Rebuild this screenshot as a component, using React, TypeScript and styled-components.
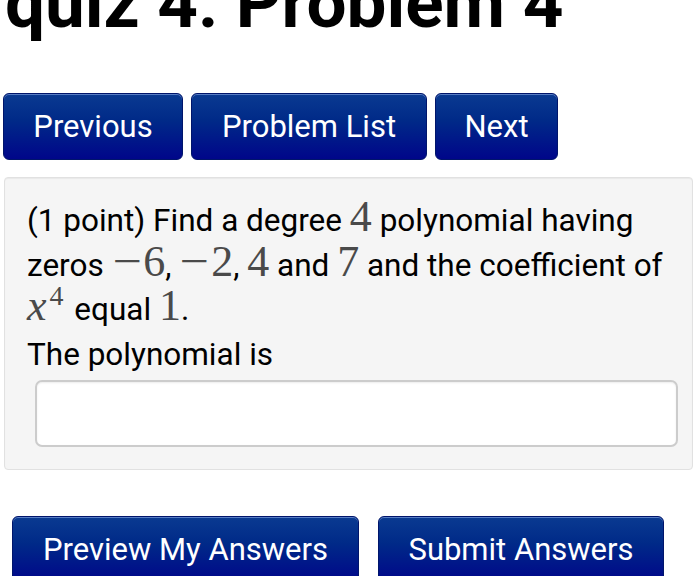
import React from "react";
import styled, { createGlobalStyle } from "styled-components";

const GlobalStyle = createGlobalStyle`
  html, body {
    margin: 0;
    padding: 0;
    background: #ffffff;
    font-family: Roboto, "Liberation Sans", Arial, sans-serif;
    color: #000;
  }
  body {
    width: 697px;
    height: 576px;
    overflow: hidden;
  }
`;

const Page = styled.div`
  display: flex;
  flex-direction: column;
  padding-left: 3px;
`;

const Title = styled.h1`
  margin: -33px 0 0 2px;
  font-size: 71px;
  line-height: 71px;
  font-weight: 700;
  white-space: nowrap;
`;

const NavRow = styled.div`
  display: flex;
  gap: 8px;
  margin-top: 55px;
`;

const Button = styled.button<{ $width: number }>`
  width: ${(p) => p.$width}px;
  height: 67px;
  padding: 0;
  border: 1px solid #00156b;
  border-radius: 6px;
  background: linear-gradient(to bottom, #0a3a91 0%, #002a88 40%, #00068a 100%);
  box-shadow: inset 0 1px 0 rgba(140, 170, 230, 0.6);
  color: #fff;
  font-family: Roboto, "Liberation Sans", Arial, sans-serif;
  font-size: 31px;
  cursor: pointer;
`;

const Panel = styled.div`
  margin: 17px 0 0 1px;
  width: 689px;
  box-sizing: border-box;
  padding: 21px 22px 22px 22px;
  background: #f5f5f5;
  border: 1px solid #e1e1e1;
  border-radius: 4px;
  box-shadow: inset 0 1px 1px rgba(0, 0, 0, 0.05);
`;

const Text = styled.p`
  margin: 0;
  font-size: 31.5px;
  line-height: 44.5px;
  white-space: nowrap;
`;

const M = styled.span<{ $italic?: boolean }>`
  display: inline-block;
  line-height: 0;
  font-family: "Liberation Serif", "DejaVu Serif", serif;
  font-size: 44px;
  color: #4a4a4a;
  font-style: ${(p) => (p.$italic ? "italic" : "normal")};
  padding-right: ${(p) => (p.$italic ? "2px" : "0")};
`;

const Minus = styled.span`
  display: inline-block;
  transform: scaleX(1.18);
  margin: 0 4px 0 3px;
`;

const Sup = styled.span`
  display: inline-block;
  line-height: 0;
  font-family: "Liberation Serif", "DejaVu Serif", serif;
  font-size: 28px;
  color: #4a4a4a;
  vertical-align: 15px;
  margin: 0 3px 0 1px;
`;

const AnswerInput = styled.input`
  display: block;
  margin: 3px 0 0 8px;
  width: 643px;
  height: 67px;
  box-sizing: border-box;
  border: 2px solid #cccccc;
  border-radius: 7px;
  background: #fff;
  box-shadow: inset 0 1px 2px rgba(0, 0, 0, 0.08);
  font-size: 28px;
  outline: none;
`;

const SubmitRow = styled.div`
  display: flex;
  gap: 19px;
  margin: 46px 0 0 9px;
`;

export default function App() {
  return (
    <>
      <GlobalStyle />
      <Page>
        <Title>quiz 4: Problem 4</Title>
        <NavRow>
          <Button $width={180}>Previous</Button>
          <Button $width={236}>Problem List</Button>
          <Button $width={123}>Next</Button>
        </NavRow>
        <Panel>
          <Text>
            (1 point) Find a degree <M>4</M> polynomial having
            <br />
            zeros{" "}
            <M>
              <Minus>−</Minus>6
            </M>
            ,{" "}
            <M>
              <Minus>−</Minus>2
            </M>
            , <M>4</M> and <M>7</M> and the coefficient of
            <br />
            <M $italic>x</M>
            <Sup>4</Sup> equal <M>1</M>.
            <br />
            The polynomial is
          </Text>
          <AnswerInput type="text" />
        </Panel>
        <SubmitRow>
          <Button $width={347}>Preview My Answers</Button>
          <Button $width={286}>Submit Answers</Button>
        </SubmitRow>
      </Page>
    </>
  );
}
